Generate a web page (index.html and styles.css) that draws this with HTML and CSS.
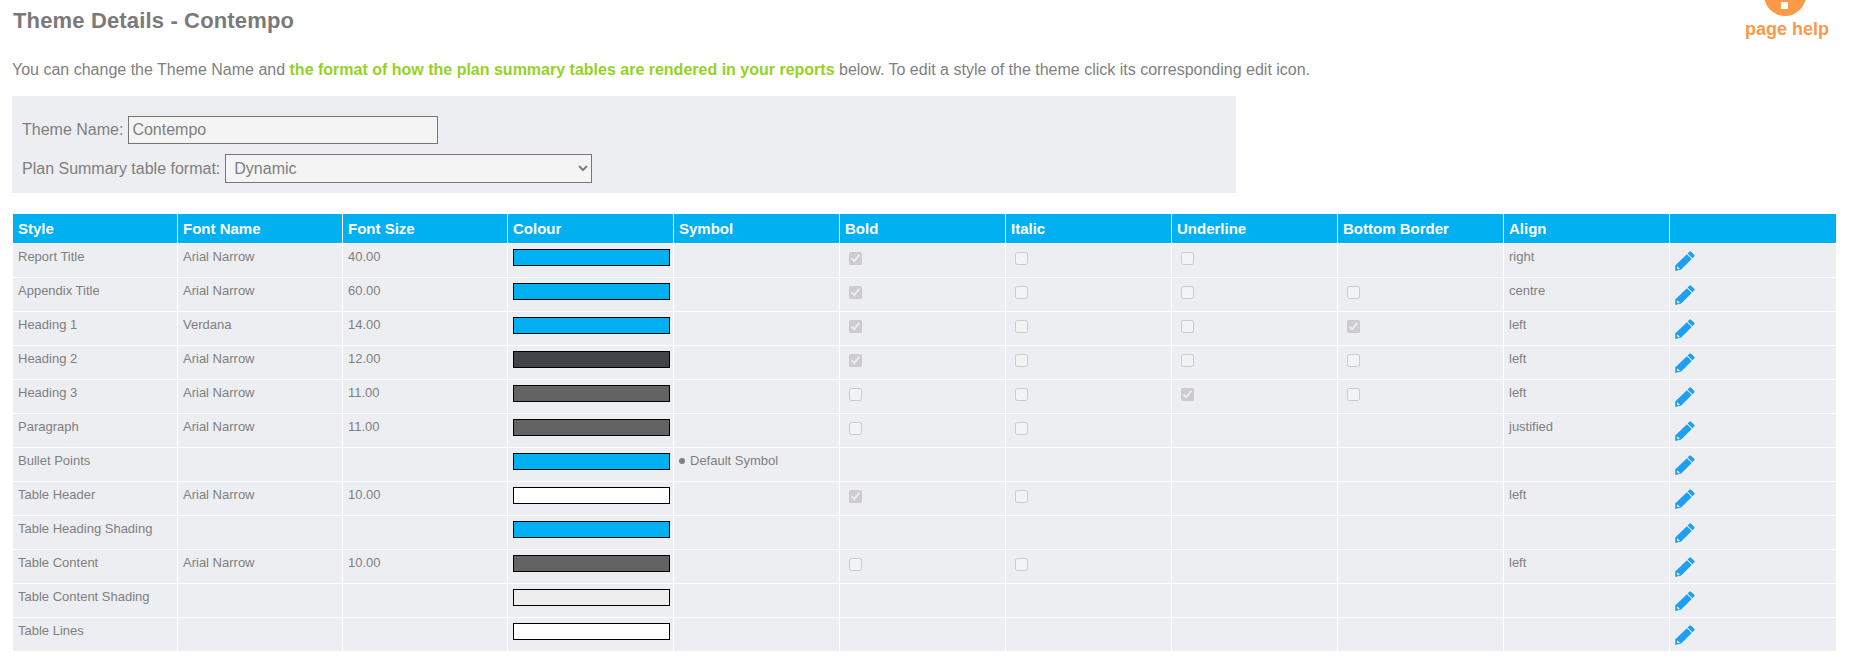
FILE: index.html
```html
<!DOCTYPE html>
<html lang="en">
<head>
    <meta charset="UTF-8">
    <meta name="viewport" content="width=device-width, initial-scale=1.0">
    <title>Theme Details - Contempo</title>
    <link rel="stylesheet" href="styles.css">
</head>
<body>
    <a class="page-help" href="#">
        <span class="help-circle"><span class="help-dot"></span></span>
        page help
    </a>

    <h1 class="page-title">Theme Details - Contempo</h1>

    <p class="intro">You can change the Theme Name and <strong>the format of how the plan summary tables are rendered in your reports</strong> below. To edit a style of the theme click its corresponding edit icon.</p>

    <!-- Theme name and table format -->
    <form class="theme-form">
        <div class="form-row">
            <label for="theme-name">Theme Name:</label>
            <input type="text" id="theme-name" class="name-input" value="Contempo">
        </div>
        <div class="form-row">
            <label for="table-format">Plan Summary table format:</label>
            <select id="table-format" class="format-select">
                <option>Dynamic</option>
            </select>
        </div>
    </form>

    <table class="style-table">
        <thead>
            <tr>
                <th class="narrow-col">Style</th>
                <th class="narrow-col">Font Name</th>
                <th class="narrow-col">Font Size</th>
                <th>Colour</th>
                <th>Symbol</th>
                <th>Bold</th>
                <th>Italic</th>
                <th>Underline</th>
                <th>Bottom Border</th>
                <th>Align</th>
                <th class="edit-col"></th>
            </tr>
        </thead>
        <tbody id="style-rows">
            <!-- Rows are inserted by the script below -->
        </tbody>
    </table>

    <script>
        // null means the cell has no checkbox for that style
        const styles = [
            { name: "Report Title", font: "Arial Narrow", size: "40.00", colour: "#00b0f0", bold: true, italic: false, underline: false, border: null, align: "right" },
            { name: "Appendix Title", font: "Arial Narrow", size: "60.00", colour: "#00b0f0", bold: true, italic: false, underline: false, border: false, align: "centre" },
            { name: "Heading 1", font: "Verdana", size: "14.00", colour: "#00b0f0", bold: true, italic: false, underline: false, border: true, align: "left" },
            { name: "Heading 2", font: "Arial Narrow", size: "12.00", colour: "#404347", bold: true, italic: false, underline: false, border: false, align: "left" },
            { name: "Heading 3", font: "Arial Narrow", size: "11.00", colour: "#636363", bold: false, italic: false, underline: true, border: false, align: "left" },
            { name: "Paragraph", font: "Arial Narrow", size: "11.00", colour: "#636363", bold: false, italic: false, underline: null, border: null, align: "justified" },
            { name: "Bullet Points", font: "", size: "", colour: "#00b0f0", symbol: "Default Symbol", bold: null, italic: null, underline: null, border: null, align: "" },
            { name: "Table Header", font: "Arial Narrow", size: "10.00", colour: "#ffffff", bold: true, italic: false, underline: null, border: null, align: "left" },
            { name: "Table Heading Shading", font: "", size: "", colour: "#00b0f0", bold: null, italic: null, underline: null, border: null, align: "" },
            { name: "Table Content", font: "Arial Narrow", size: "10.00", colour: "#636363", bold: false, italic: false, underline: null, border: null, align: "left" },
            { name: "Table Content Shading", font: "", size: "", colour: "#eeeeee", bold: null, italic: null, underline: null, border: null, align: "" },
            { name: "Table Lines", font: "", size: "", colour: "#ffffff", bold: null, italic: null, underline: null, border: null, align: "" }
        ];

        const pencil = `
            <svg class="edit-icon" viewBox="0 0 20 20" aria-hidden="true">
                <path fill-rule="evenodd" d="M14.6 0.6 Q15.2 0.2 15.8 0.6 L19.4 4 Q19.9 4.6 19.4 5.2 L17.4 7.2 L12.6 2.6 Z M11.9 3.3 L16.7 7.9 L6.2 18.6 L0.2 20 L0.2 14.6 Z M2.6 15.4 L1.9 16.1 L1.9 17.1 L3 18.2 L4.1 18.2 L4.7 17.6 Z"/>
            </svg>`;

        function checkCell(value) {
            if (value === null) return "<td></td>";
            return `<td class="check-cell"><input type="checkbox" disabled ${value ? "checked" : ""}></td>`;
        }

        function symbolCell(symbol) {
            if (!symbol) return "<td></td>";
            return `<td><span class="bullet"></span>${symbol}</td>`;
        }

        const tbody = document.getElementById("style-rows");
        styles.forEach(style => {
            const row = document.createElement("tr");
            row.innerHTML = `
                <td>${style.name}</td>
                <td>${style.font}</td>
                <td>${style.size}</td>
                <td><div class="swatch" style="background-color: ${style.colour}"></div></td>
                ${symbolCell(style.symbol)}
                ${checkCell(style.bold)}
                ${checkCell(style.italic)}
                ${checkCell(style.underline)}
                ${checkCell(style.border)}
                <td>${style.align}</td>
                <td class="edit-cell"><a href="#">${pencil}</a></td>
            `;
            tbody.appendChild(row);
        });
    </script>
</body>
</html>
```

FILE: styles.css
```css
* {
    box-sizing: border-box;
}

body {
    margin: 0;
    padding: 0 12px;
    height: 666px;
    overflow: hidden;
    position: relative;
    font-family: "Liberation Sans", Arial, sans-serif;
    color: #7f7f7f;
    background-color: #fff;
}

/* Help badge, cut off by the top of the window */
.page-help {
    position: absolute;
    top: -26px;
    right: 21px;
    display: flex;
    flex-direction: column;
    align-items: center;
    gap: 3px;
    color: #fb9a48;
    font-size: 18px;
    font-weight: bold;
    text-decoration: none;
}

.help-circle {
    display: flex;
    justify-content: center;
    align-items: flex-end;
    width: 42px;
    height: 42px;
    margin-right: 4px;
    padding-bottom: 7px;
    border-radius: 50%;
    background-color: #fb9a48;
}

.help-dot {
    width: 7px;
    height: 7px;
    background-color: #fff;
}

.page-title {
    margin: 0;
    padding: 8px 0 0 1px;
    font-size: 22px;
    line-height: 25px;
    letter-spacing: 0.15px;
    color: #7a7a7a;
}

.intro {
    margin: 28px 0 17px;
    font-size: 16px;
    line-height: 18px;
}

.intro strong {
    color: #94d21f;
}

/* Theme form */
.theme-form {
    width: 1224px;
    height: 97px;
    padding: 20px 10px 0;
    background-color: #edeef1;
}

.form-row {
    display: flex;
    align-items: center;
    gap: 5px;
    font-size: 16px;
    margin-bottom: 10px;
}

.name-input {
    width: 310px;
    height: 28px;
    padding: 0 3px;
    border: 1px solid #767676;
    background-color: #f4f4f4;
    color: #7f7f7f;
    font: 16px "Liberation Sans", Arial, sans-serif;
}

.format-select {
    width: 367px;
    height: 29px;
    padding: 0 4px;
    border: 1px solid #767676;
    border-radius: 0;
    background-color: #f4f4f4;
    color: #7f7f7f;
    font: 16px "Liberation Sans", Arial, sans-serif;
}

/* Styles table */
.style-table {
    width: 1825px;
    margin-top: 20px;
    table-layout: fixed;
    border-collapse: separate;
    border-spacing: 1px;
}

.style-table th {
    height: 29px;
    padding: 0 5px;
    background-color: #00b0f0;
    color: #fff;
    font-size: 15px;
    text-align: left;
}

.style-table th.narrow-col {
    width: 164px;
}

.style-table th.edit-col {
    width: 166px;
}

.style-table td {
    height: 33px;
    padding: 5px;
    background-color: #edeef1;
    font-size: 13px;
    line-height: 15px;
    vertical-align: top;
}

.swatch {
    width: 157px;
    height: 17px;
    border: 1px solid #000;
}

.bullet {
    display: inline-block;
    width: 6px;
    height: 6px;
    margin: 0 5px 1px 0;
    border-radius: 50%;
    background-color: #7f7f7f;
}

.check-cell input {
    display: block;
    width: 13px;
    height: 13px;
    margin: 3px 0 0 4px;
}

.edit-icon {
    display: block;
    width: 20px;
    height: 20px;
    margin: 2px 0 0 0;
    fill: #1e9ff2;
}
```
